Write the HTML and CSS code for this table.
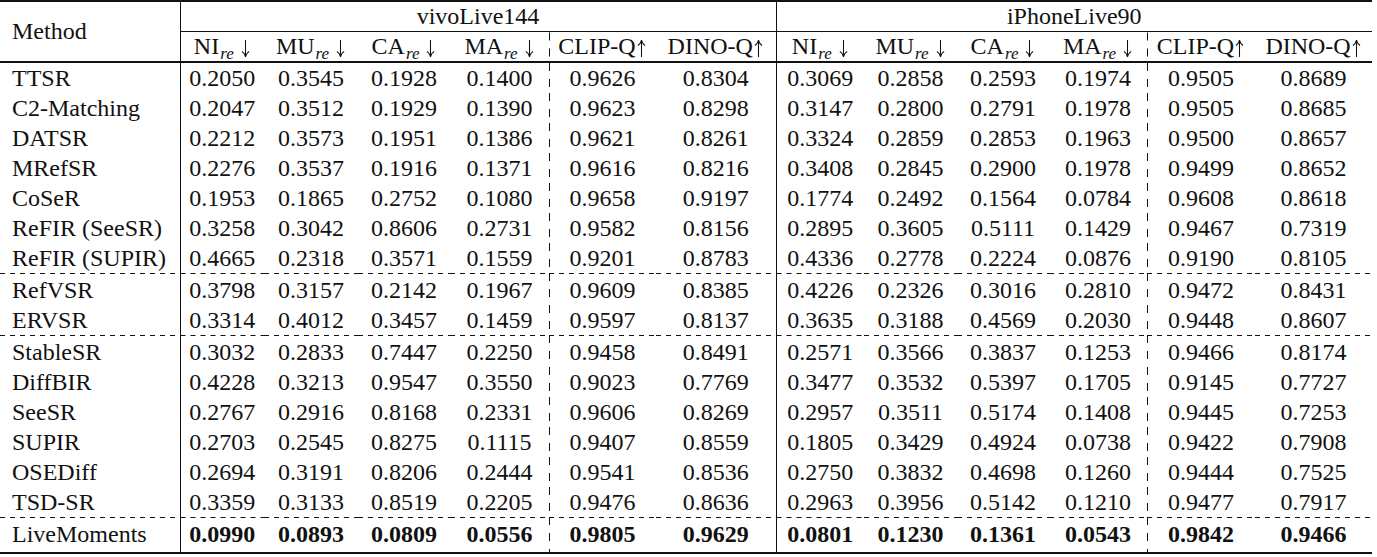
FILE: index.html
```html
<!DOCTYPE html>
<html lang="en">
<head>
    <meta charset="UTF-8">
    <meta name="viewport" content="width=device-width, initial-scale=1.0">
    <title>Live photo reference SR comparison</title>
    <link rel="stylesheet" href="styles.css">
</head>
<body>
    <!-- arrow glyphs (thin, like the math ones) -->
    <svg class="defs" width="0" height="0" aria-hidden="true">
        <symbol id="down" viewBox="0 0 10 20">
            <path d="M5 1V18.6M1.2 13.2Q4 14.6 5 18.8Q6 14.6 8.8 13.2" fill="none" stroke="currentColor" stroke-width="1.1"/>
        </symbol>
        <symbol id="up" viewBox="0 0 10 20">
            <path d="M5 19V1.4M1.2 6.8Q4 5.4 5 1.2Q6 5.4 8.8 6.8" fill="none" stroke="currentColor" stroke-width="1.1"/>
        </symbol>
    </svg>

    <table class="results">
        <colgroup>
            <col class="w-method">
            <col class="w84"><col class="w94"><col class="w92"><col class="w99"><col class="w107"><col class="w120">
            <col class="w88"><col class="w93"><col class="w92"><col class="w98"><col class="w108"><col class="w117">
        </colgroup>
        <thead>
            <tr class="groups">
                <th rowspan="2" class="method head-method">Method</th>
                <th colspan="6" class="group vl">vivoLive144</th>
                <th colspan="6" class="group vl">iPhoneLive90</th>
            </tr>
            <tr class="metrics">
                <th class="vl">NI<sub>re</sub> <svg class="arrow"><use href="#down"/></svg></th>
                <th>MU<sub>re</sub> <svg class="arrow"><use href="#down"/></svg></th>
                <th>CA<sub>re</sub> <svg class="arrow"><use href="#down"/></svg></th>
                <th>MA<sub>re</sub> <svg class="arrow"><use href="#down"/></svg></th>
                <th class="dv">CLIP-Q<svg class="arrow"><use href="#up"/></svg></th>
                <th>DINO-Q<svg class="arrow"><use href="#up"/></svg></th>
                <th class="vl">NI<sub>re</sub> <svg class="arrow"><use href="#down"/></svg></th>
                <th>MU<sub>re</sub> <svg class="arrow"><use href="#down"/></svg></th>
                <th>CA<sub>re</sub> <svg class="arrow"><use href="#down"/></svg></th>
                <th>MA<sub>re</sub> <svg class="arrow"><use href="#down"/></svg></th>
                <th class="dv">CLIP-Q<svg class="arrow"><use href="#up"/></svg></th>
                <th>DINO-Q<svg class="arrow"><use href="#up"/></svg></th>
            </tr>
        </thead>
        <tbody>
            <tr><td class="method">TTSR</td><td class="vl">0.2050</td><td>0.3545</td><td>0.1928</td><td>0.1400</td><td class="dv">0.9626</td><td>0.8304</td><td class="vl">0.3069</td><td>0.2858</td><td>0.2593</td><td>0.1974</td><td class="dv">0.9505</td><td>0.8689</td></tr>
            <tr><td class="method">C2-Matching</td><td class="vl">0.2047</td><td>0.3512</td><td>0.1929</td><td>0.1390</td><td class="dv">0.9623</td><td>0.8298</td><td class="vl">0.3147</td><td>0.2800</td><td>0.2791</td><td>0.1978</td><td class="dv">0.9505</td><td>0.8685</td></tr>
            <tr><td class="method">DATSR</td><td class="vl">0.2212</td><td>0.3573</td><td>0.1951</td><td>0.1386</td><td class="dv">0.9621</td><td>0.8261</td><td class="vl">0.3324</td><td>0.2859</td><td>0.2853</td><td>0.1963</td><td class="dv">0.9500</td><td>0.8657</td></tr>
            <tr><td class="method">MRefSR</td><td class="vl">0.2276</td><td>0.3537</td><td>0.1916</td><td>0.1371</td><td class="dv">0.9616</td><td>0.8216</td><td class="vl">0.3408</td><td>0.2845</td><td>0.2900</td><td>0.1978</td><td class="dv">0.9499</td><td>0.8652</td></tr>
            <tr><td class="method">CoSeR</td><td class="vl">0.1953</td><td>0.1865</td><td>0.2752</td><td>0.1080</td><td class="dv">0.9658</td><td>0.9197</td><td class="vl">0.1774</td><td>0.2492</td><td>0.1564</td><td>0.0784</td><td class="dv">0.9608</td><td>0.8618</td></tr>
            <tr><td class="method">ReFIR (SeeSR)</td><td class="vl">0.3258</td><td>0.3042</td><td>0.8606</td><td>0.2731</td><td class="dv">0.9582</td><td>0.8156</td><td class="vl">0.2895</td><td>0.3605</td><td>0.5111</td><td>0.1429</td><td class="dv">0.9467</td><td>0.7319</td></tr>
            <tr><td class="method">ReFIR (SUPIR)</td><td class="vl">0.4665</td><td>0.2318</td><td>0.3571</td><td>0.1559</td><td class="dv">0.9201</td><td>0.8783</td><td class="vl">0.4336</td><td>0.2778</td><td>0.2224</td><td>0.0876</td><td class="dv">0.9190</td><td>0.8105</td></tr>

            <tr class="dash"><td class="method">RefVSR</td><td class="vl">0.3798</td><td>0.3157</td><td>0.2142</td><td>0.1967</td><td class="dv">0.9609</td><td>0.8385</td><td class="vl">0.4226</td><td>0.2326</td><td>0.3016</td><td>0.2810</td><td class="dv">0.9472</td><td>0.8431</td></tr>
            <tr><td class="method">ERVSR</td><td class="vl">0.3314</td><td>0.4012</td><td>0.3457</td><td>0.1459</td><td class="dv">0.9597</td><td>0.8137</td><td class="vl">0.3635</td><td>0.3188</td><td>0.4569</td><td>0.2030</td><td class="dv">0.9448</td><td>0.8607</td></tr>

            <tr class="dash"><td class="method">StableSR</td><td class="vl">0.3032</td><td>0.2833</td><td>0.7447</td><td>0.2250</td><td class="dv">0.9458</td><td>0.8491</td><td class="vl">0.2571</td><td>0.3566</td><td>0.3837</td><td>0.1253</td><td class="dv">0.9466</td><td>0.8174</td></tr>
            <tr><td class="method">DiffBIR</td><td class="vl">0.4228</td><td>0.3213</td><td>0.9547</td><td>0.3550</td><td class="dv">0.9023</td><td>0.7769</td><td class="vl">0.3477</td><td>0.3532</td><td>0.5397</td><td>0.1705</td><td class="dv">0.9145</td><td>0.7727</td></tr>
            <tr><td class="method">SeeSR</td><td class="vl">0.2767</td><td>0.2916</td><td>0.8168</td><td>0.2331</td><td class="dv">0.9606</td><td>0.8269</td><td class="vl">0.2957</td><td>0.3511</td><td>0.5174</td><td>0.1408</td><td class="dv">0.9445</td><td>0.7253</td></tr>
            <tr><td class="method">SUPIR</td><td class="vl">0.2703</td><td>0.2545</td><td>0.8275</td><td>0.1115</td><td class="dv">0.9407</td><td>0.8559</td><td class="vl">0.1805</td><td>0.3429</td><td>0.4924</td><td>0.0738</td><td class="dv">0.9422</td><td>0.7908</td></tr>
            <tr><td class="method">OSEDiff</td><td class="vl">0.2694</td><td>0.3191</td><td>0.8206</td><td>0.2444</td><td class="dv">0.9541</td><td>0.8536</td><td class="vl">0.2750</td><td>0.3832</td><td>0.4698</td><td>0.1260</td><td class="dv">0.9444</td><td>0.7525</td></tr>
            <tr><td class="method">TSD-SR</td><td class="vl">0.3359</td><td>0.3133</td><td>0.8519</td><td>0.2205</td><td class="dv">0.9476</td><td>0.8636</td><td class="vl">0.2963</td><td>0.3956</td><td>0.5142</td><td>0.1210</td><td class="dv">0.9477</td><td>0.7917</td></tr>

            <!-- ours -->
            <tr class="dash best"><td class="method">LiveMoments</td><td class="vl">0.0990</td><td>0.0893</td><td>0.0809</td><td>0.0556</td><td class="dv">0.9805</td><td>0.9629</td><td class="vl">0.0801</td><td>0.1230</td><td>0.1361</td><td>0.0543</td><td class="dv">0.9842</td><td>0.9466</td></tr>
        </tbody>
    </table>
</body>
</html>
```

FILE: styles.css
```css
body {
    margin: 0;
    background-color: #fff;
}
.defs {
    position: absolute;
}
.results {
    border-collapse: collapse;
    table-layout: fixed;
    width: 1372px;
    font-family: "Liberation Serif", "Times New Roman", serif;
    font-size: 24px;
    color: #111;
}
.w-method { width: 180px; }
.w84 { width: 84px; }
.w88 { width: 88px; }
.w92 { width: 92px; }
.w93 { width: 93px; }
.w94 { width: 94px; }
.w98 { width: 98px; }
.w99 { width: 99px; }
.w107 { width: 107px; }
.w108 { width: 108px; }
.w117 { width: 117px; }
.w120 { width: 120px; }

th, td {
    padding: 0;
    height: 30px;
    line-height: 30px;
    text-align: center;
    font-weight: normal;
    white-space: nowrap;
}
thead th {
    height: 29px;
    line-height: 29px;
}
.method {
    text-align: left;
    padding-left: 12px;
}
.groups th {
    border-top: 2px solid #111;
}
.group {
    border-bottom: 1px solid #111;
}
.metrics th,
.head-method {
    border-bottom: 2px solid #111;
}
tbody tr:last-child td {
    padding-bottom: 3px;
    border-bottom: 2px solid #111;
}
.vl {
    border-left: 1px solid #111;
}
sub {
    font-size: 17px;
    font-style: italic;
    line-height: 0;
    vertical-align: -5px;
    margin-left: 1px;
}
.arrow {
    width: 11px;
    height: 19px;
    vertical-align: -4px;
    color: #111;
}

/* dashed rules */
.dv {
    background-image: linear-gradient(to bottom, #111 50%, transparent 50%);
    background-size: 1px 16px;
    background-repeat: repeat-y;
    background-position: left top;
}
.dash td {
    height: 30px;
    padding-top: 2px;
    background-image: linear-gradient(to right, #111 50%, transparent 50%);
    background-size: 10px 1px;
    background-repeat: repeat-x;
    background-position: left top;
}
.dash td.dv {
    background-image: linear-gradient(to right, #111 50%, transparent 50%), linear-gradient(to bottom, #111 50%, transparent 50%);
    background-size: 10px 1px, 1px 16px;
    background-repeat: repeat-x, repeat-y;
    background-position: left top, left top;
}
.best td:not(.method) {
    font-weight: bold;
}
```
